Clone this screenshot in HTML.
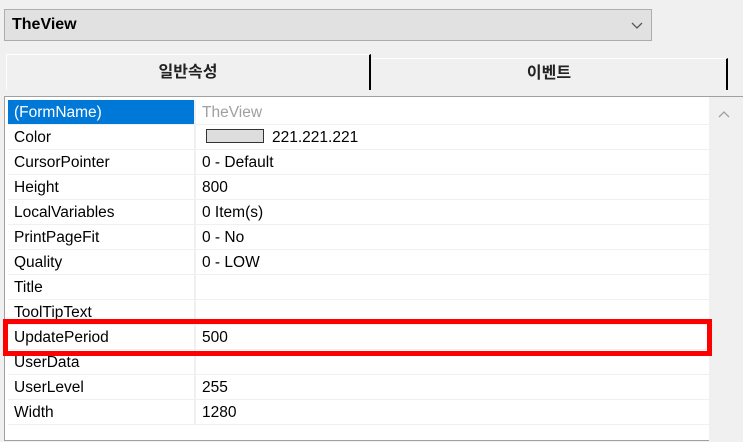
<!DOCTYPE html>
<html><head><style>
body{margin:0;width:743px;height:435px;background:#f0f0f0;position:relative;overflow:hidden;font-family:"Liberation Sans","Noto Sans CJK KR",sans-serif;}
.combo{position:absolute;left:4px;top:9px;width:648px;height:32px;background:#e1e1e1;border:1px solid #adadad;box-sizing:border-box;}
.combo span{position:absolute;left:7px;top:6px;font-weight:bold;font-size:16px;color:#000;}
.tab{position:absolute;top:54px;height:35px;background:#f0f0f0;font-size:16px;font-weight:bold;text-align:center;line-height:36px;color:#222;}
.grid{position:absolute;left:4px;top:96px;width:742px;height:345px;background:#fff;border:1px solid #a0a0a0;box-sizing:border-box;}
.row{position:absolute;left:3px;width:701px;height:25px;border-bottom:1px solid #f0f0f0;box-sizing:border-box;font-size:15.5px;}
.row .n{position:absolute;left:0;top:0;width:188px;height:24px;padding-left:6px;line-height:25px;border-right:2px solid #f0f0f0;box-sizing:border-box;}
.row .v{position:absolute;left:194px;top:0;line-height:25px;}
.sb{position:absolute;left:704px;top:0;width:38px;height:345px;background:#f0f0f0;}
.red{position:absolute;left:3px;top:319px;width:709px;height:37px;border:5px solid #f00;box-sizing:border-box;}
</style></head><body>
<div class="combo"><span>TheView</span>
<svg style="position:absolute;left:626px;top:12px" width="12" height="8"><path d="M1 1 L6 6 L11 1" stroke="#555" fill="none" stroke-width="1.3"/></svg></div>
<div class="tab" style="left:6px;width:362px;border-top:1px solid #fff;border-left:1px solid #fff;border-right:2px solid #000;">일반속성</div>
<div class="tab" style="left:372px;width:354px;top:58px;height:31px;line-height:30px;border-right:2px solid #000;border-top:1px solid #fff;">이벤트</div>
<div class="grid">
<div class="row" style="top:3px"><div class="n" style="background:#0078d7;color:#fff;">(FormName)</div><div class="v" style="color:#a0a0a0">TheView</div></div>
<div class="row" style="top:28px"><div class="n">Color</div><div class="v"><span style="display:inline-block;width:56px;height:12px;background:#ddd;border:1px solid #333;vertical-align:-1px;margin-right:8px;margin-left:4px"></span>221.221.221</div></div>
<div class="row" style="top:53px"><div class="n">CursorPointer</div><div class="v">0 - Default</div></div>
<div class="row" style="top:78px"><div class="n">Height</div><div class="v">800</div></div>
<div class="row" style="top:103px"><div class="n">LocalVariables</div><div class="v">0 Item(s)</div></div>
<div class="row" style="top:128px"><div class="n">PrintPageFit</div><div class="v">0 - No</div></div>
<div class="row" style="top:153px"><div class="n">Quality</div><div class="v">0 - LOW</div></div>
<div class="row" style="top:178px"><div class="n">Title</div><div class="v"></div></div>
<div class="row" style="top:203px"><div class="n">ToolTipText</div><div class="v"></div></div>
<div class="row" style="top:228px"><div class="n">UpdatePeriod</div><div class="v">500</div></div>
<div class="row" style="top:253px"><div class="n">UserData</div><div class="v"></div></div>
<div class="row" style="top:278px"><div class="n">UserLevel</div><div class="v">255</div></div>
<div class="row" style="top:303px"><div class="n">Width</div><div class="v">1280</div></div>
<div class="sb"><svg style="position:absolute;left:9px;top:13px" width="12" height="8"><path d="M1 7 L6 2 L11 7" stroke="#a0a0a0" fill="none" stroke-width="1.3"/></svg></div>
</div>
<div class="red"></div>
</body></html>
